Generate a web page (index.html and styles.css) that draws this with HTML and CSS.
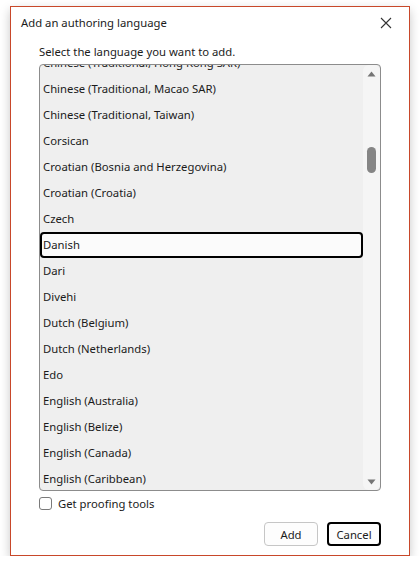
FILE: index.html
```html
<!DOCTYPE html>
<html>
<head>
<meta charset="utf-8">
<link rel="stylesheet" href="styles.css">
</head>
<body>
<div class="window">
  <div class="titlebar">
    <span class="title">Add an authoring language</span>
    <svg class="close" width="12" height="12" viewBox="0 0 12 12"><path d="M1 1 L11 11 M11 1 L1 11" stroke="#333" stroke-width="1.1" fill="none"/></svg>
  </div>
  <div class="content">
    <div class="prompt">Select the language you want to add.</div>
    <div class="listbox">
      <div class="items">
        <div class="item">Chinese (Traditional, Hong Kong SAR)</div>
        <div class="item">Chinese (Traditional, Macao SAR)</div>
        <div class="item">Chinese (Traditional, Taiwan)</div>
        <div class="item">Corsican</div>
        <div class="item">Croatian (Bosnia and Herzegovina)</div>
        <div class="item">Croatian (Croatia)</div>
        <div class="item">Czech</div>
        <div class="item selected">Danish</div>
        <div class="item">Dari</div>
        <div class="item">Divehi</div>
        <div class="item">Dutch (Belgium)</div>
        <div class="item">Dutch (Netherlands)</div>
        <div class="item">Edo</div>
        <div class="item">English (Australia)</div>
        <div class="item">English (Belize)</div>
        <div class="item">English (Canada)</div>
        <div class="item">English (Caribbean)</div>
      </div>
      <div class="scrollbar">
        <svg class="arrow" width="9" height="6" viewBox="0 0 9 6"><path d="M4.5 0.5 L8.5 5.5 L0.5 5.5 Z" fill="#757575"/></svg>
        <div class="track"><div class="thumb"></div></div>
        <svg class="arrow" width="9" height="6" viewBox="0 0 9 6"><path d="M0.5 0.5 L8.5 0.5 L4.5 5.5 Z" fill="#757575"/></svg>
      </div>
    </div>
    <label class="check"><span class="box"></span><span>Get proofing tools</span></label>
    <div class="buttons">
      <button class="btn">Add</button>
      <button class="btn focused">Cancel</button>
    </div>
  </div>
</div>
</body>
</html>
```

FILE: styles.css
```css
html, body {
  margin: 0;
  padding: 0;
  background: #ffffff;
}
body {
  font-family: "Noto Sans", "Open Sans", sans-serif;
  font-size: 11.3px;
  color: #1b1b1b;
  padding: 6px 0 0 10px;
}
.window {
  width: 398px;
  height: 548px;
  border: 1px solid #c8482a;
  background: #ffffff;
  box-shadow: 0 4px 10px rgba(0,0,0,0.22);
  display: flex;
  flex-direction: column;
}
.titlebar {
  height: 31px;
  display: flex;
  align-items: center;
  justify-content: space-between;
  padding: 0 17px 0 10px;
}
.title {
  font-size: 11.3px;
  color: #1b1b1b;
}
.close {
  display: block;
}
.content {
  padding: 6px 28px 0 28px;
  display: flex;
  flex-direction: column;
}
.prompt {
  line-height: 16px;
  height: 20px;
}
.listbox {
  height: 425px;
  border: 1px solid #8c8c8c;
  border-radius: 4px;
  background: #efefef;
  display: flex;
  overflow: hidden;
}
.items {
  flex: 1;
  margin-top: -15px;
  overflow: hidden;
}
.item {
  height: 26px;
  line-height: 26px;
  padding-left: 3px;
  white-space: nowrap;
  box-sizing: border-box;
}
.item.selected {
  background: #fbfbfb;
  border: 2px solid #000;
  border-radius: 4px;
  line-height: 22px;
  padding-left: 1px;
}
.scrollbar {
  width: 17px;
  background: #f5f5f5;
  border-radius: 6px;
  display: flex;
  flex-direction: column;
  align-items: center;
  padding: 6px 0 5px;
  box-sizing: border-box;
}
.arrow {
  display: block;
}
.track {
  flex: 1;
  width: 100%;
  display: flex;
  justify-content: center;
}
.thumb {
  width: 9px;
  height: 26px;
  margin-top: 70px;
  border-radius: 5px;
  background: #858585;
}
.check {
  display: flex;
  align-items: center;
  gap: 6px;
  height: 24px;
}
.box {
  width: 11px;
  height: 11px;
  border: 1px solid #7a7a7a;
  border-radius: 3px;
  background: #fff;
}
.buttons {
  display: flex;
  justify-content: flex-end;
  gap: 9px;
  margin-top: 7px;
}
.btn {
  font-family: "Noto Sans", "Open Sans", sans-serif;
  font-size: 11.3px;
  color: #1b1b1b;
  width: 54px;
  height: 24px;
  background: #fdfdfd;
  border: 1px solid #c6c6c6;
  border-radius: 4px;
  padding: 0;
}
.btn.focused {
  border: 2px solid #000;
}
```
